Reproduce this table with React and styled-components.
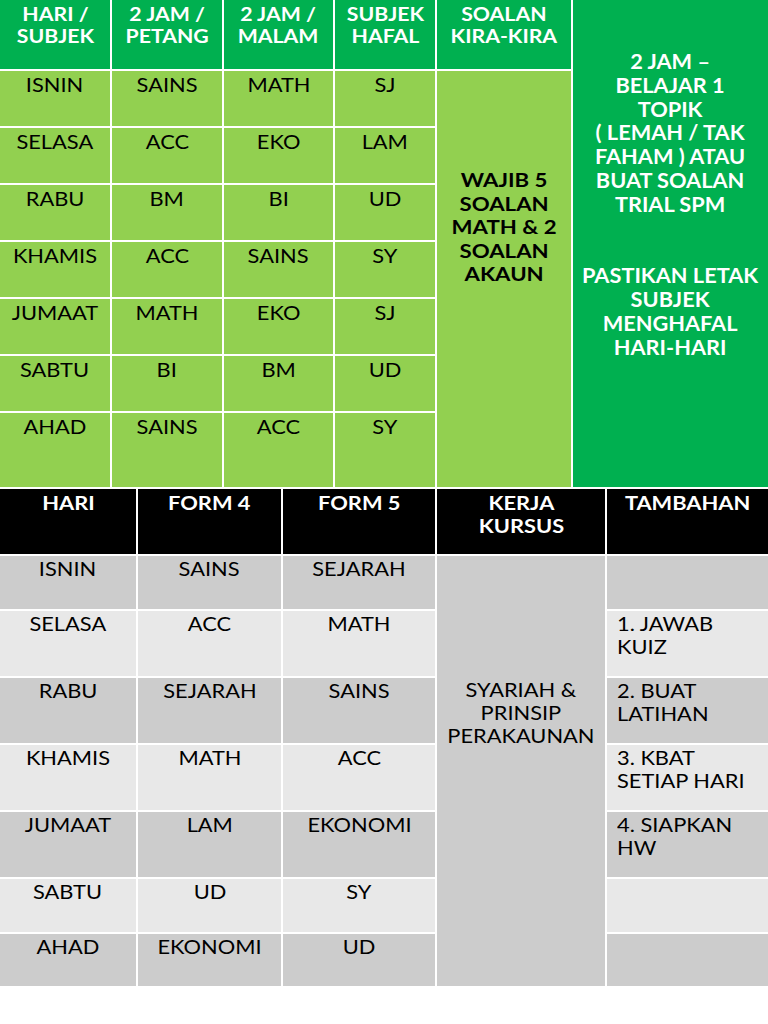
import React from "react";
import styled, { createGlobalStyle } from "styled-components";

const Global = createGlobalStyle`
  html, body { margin: 0; padding: 0; background: #ffffff; }
  body { font-family: Lato, "Noto Sans", "Liberation Sans", sans-serif; }
`;

const Page = styled.div`
  width: 768px;
  display: flex;
  flex-direction: column;
  gap: 2px;
`;

const TopGrid = styled.div`
  display: grid;
  grid-template-columns: 110px 110px 109px 100px 134px 1fr;
  grid-template-rows: 69px repeat(6, 55px) 74px;
  gap: 2px;
  background: #ffffff;
`;

const BottomGrid = styled.div`
  display: grid;
  grid-template-columns: 136px 143px 152px 168px 1fr;
  grid-template-rows: 65px 53px 65px 65px 65px 65px 53px 52px;
  gap: 2px;
  background: #ffffff;
`;

const Cell = styled.div`
  box-sizing: border-box;
  padding: ${(p) => p.$pad || "3px 2px 0"};
  text-align: ${(p) => p.$align || "center"};
  font-size: ${(p) => p.$size || "18.67px"};
  line-height: ${(p) => p.$lh || "22.4px"};
  font-weight: ${(p) => (p.$bold ? 700 : 400)};
  color: ${(p) => p.$color || "#000000"};
  background: ${(p) => p.$bg};
  grid-row: ${(p) => p.$row || "auto"};
  grid-column: ${(p) => p.$col || "auto"};
  white-space: nowrap;
`;

/* the source slide is rendered horizontally stretched; mimic the wide glyphs */
const Wide = styled.span`
  display: inline-block;
  transform: scaleX(${(p) => p.$sx || 1.17});
  transform-origin: ${(p) => (p.$left ? "left top" : "center top")};
`;

const GREEN = "#00b050";
const LIME = "#92d050";
const DARK = "#cccccc";
const LIGHT = "#e8e8e8";

const topRows = [
  ["ISNIN", "SAINS", "MATH", "SJ"],
  ["SELASA", "ACC", "EKO", "LAM"],
  ["RABU", "BM", "BI", "UD"],
  ["KHAMIS", "ACC", "SAINS", "SY"],
  ["JUMAAT", "MATH", "EKO", "SJ"],
  ["SABTU", "BI", "BM", "UD"],
  ["AHAD", "SAINS", "ACC", "SY"],
];

const bottomRows = [
  ["ISNIN", "SAINS", "SEJARAH", []],
  ["SELASA", "ACC", "MATH", ["1. JAWAB", "KUIZ"]],
  ["RABU", "SEJARAH", "SAINS", ["2. BUAT", "LATIHAN"]],
  ["KHAMIS", "MATH", "ACC", ["3. KBAT", "SETIAP HARI"]],
  ["JUMAAT", "LAM", "EKONOMI", ["4. SIAPKAN", "HW"]],
  ["SABTU", "UD", "SY", []],
  ["AHAD", "EKONOMI", "UD", []],
];

const Lines = ({ lines }) =>
  lines.map((l, i) => (
    <React.Fragment key={i}>
      {i > 0 && <br />}
      {l}
    </React.Fragment>
  ));

const HeadCell = ({ lines }) => (
  <Cell $bg={GREEN} $color="#fff" $bold $size="19.5px" $lh="21.7px">
    <Wide $sx={1.09}>
      <Lines lines={lines} />
    </Wide>
  </Cell>
);

const BlackHead = ({ lines }) => (
  <Cell $bg="#000" $color="#fff" $bold $pad="3px 2px 0" $lh="23px">
    <Wide>
      <Lines lines={lines} />
    </Wide>
  </Cell>
);

export default function App() {
  return (
    <>
      <Global />
      <Page>
        <TopGrid>
          <HeadCell lines={["HARI /", "SUBJEK"]} />
          <HeadCell lines={["2 JAM /", "PETANG"]} />
          <HeadCell lines={["2 JAM /", "MALAM"]} />
          <HeadCell lines={["SUBJEK", "HAFAL"]} />
          <HeadCell lines={["SOALAN", "KIRA-KIRA"]} />
          <Cell
            $bg={GREEN}
            $color="#fff"
            $bold
            $row="1 / span 8"
            $col="6"
            $size="20.5px"
            $lh="23.83px"
            $pad="50px 2px 0"
          >
            <Wide $sx={1.06}>
              <Lines lines={["2 JAM –", "BELAJAR 1", "TOPIK", "( LEMAH / TAK", "FAHAM ) ATAU", "BUAT SOALAN", "TRIAL SPM"]} />
              <br />
              <br />
              <br />
              <Lines lines={["PASTIKAN LETAK", "SUBJEK", "MENGHAFAL", "HARI-HARI"]} />
            </Wide>
          </Cell>
          {topRows.map((r, i) => (
            <React.Fragment key={i}>
              {r.map((t, j) => (
                <Cell key={j} $bg={LIME} $row={String(i + 2)} $col={String(j + 1)}>
                  <Wide>{t}</Wide>
                </Cell>
              ))}
            </React.Fragment>
          ))}
          <Cell $bg={LIME} $bold $row="2 / span 7" $col="5" $lh="23.6px" $pad="98px 2px 0">
            <Wide $sx={1.19}>
              <Lines lines={["WAJIB 5", "SOALAN", "MATH & 2", "SOALAN", "AKAUN"]} />
            </Wide>
          </Cell>
        </TopGrid>
        <BottomGrid>
          <BlackHead lines={["HARI"]} />
          <BlackHead lines={["FORM 4"]} />
          <BlackHead lines={["FORM 5"]} />
          <BlackHead lines={["KERJA", "KURSUS"]} />
          <BlackHead lines={["TAMBAHAN"]} />
          {bottomRows.map((r, i) => {
            const bg = i % 2 === 0 ? DARK : LIGHT;
            const row = String(i + 2);
            return (
              <React.Fragment key={i}>
                <Cell $bg={bg} $row={row} $col="1" $lh="23px" $pad="2px 2px 0"><Wide>{r[0]}</Wide></Cell>
                <Cell $bg={bg} $row={row} $col="2" $lh="23px" $pad="2px 2px 0"><Wide>{r[1]}</Wide></Cell>
                <Cell $bg={bg} $row={row} $col="3" $lh="23px" $pad="2px 2px 0"><Wide>{r[2]}</Wide></Cell>
                <Cell $bg={bg} $row={row} $col="5" $align="left" $lh="23px" $pad="2px 2px 0 10px">
                  <Wide $left>
                    <Lines lines={r[3]} />
                  </Wide>
                </Cell>
              </React.Fragment>
            );
          })}
          <Cell $bg={DARK} $row="2 / span 7" $col="4" $lh="23px" $pad="123px 2px 0">
            <Wide>
              <Lines lines={["SYARIAH &", "PRINSIP", "PERAKAUNAN"]} />
            </Wide>
          </Cell>
        </BottomGrid>
      </Page>
    </>
  );
}
